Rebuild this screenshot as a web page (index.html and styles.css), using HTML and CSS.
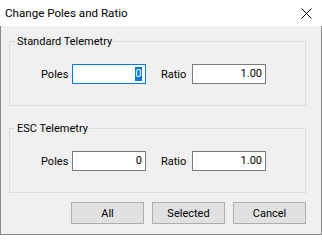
FILE: index.html
```html
<!DOCTYPE html>
<html>
<head>
<meta charset="utf-8">
<link rel="stylesheet" href="styles.css">
</head>
<body>
<div class="window">
  <div class="titlebar">
    <span class="title">Change Poles and Ratio</span>
    <svg class="close" width="11" height="11" viewBox="0 0 11 11"><path d="M0.5 0.5 L10.5 10.5 M10.5 0.5 L0.5 10.5" stroke="#000" stroke-width="1" fill="none"/></svg>
  </div>
  <div class="client">
    <fieldset class="group">
      <legend>Standard Telemetry</legend>
      <div class="row">
        <span class="label">Poles</span>
        <div class="field focus"><span class="sel">0</span></div>
        <span class="label second">Ratio</span>
        <div class="field">1.00</div>
      </div>
    </fieldset>
    <fieldset class="group">
      <legend>ESC Telemetry</legend>
      <div class="row">
        <span class="label">Poles</span>
        <div class="field">0</div>
        <span class="label second">Ratio</span>
        <div class="field">1.00</div>
      </div>
    </fieldset>
    <div class="buttons">
      <div class="btn">All</div>
      <div class="btn">Selected</div>
      <div class="btn">Cancel</div>
    </div>
  </div>
</div>
</body>
</html>
```
FILE: styles.css
```css
html, body {
  margin: 0;
  padding: 0;
  background: #ffffff;
}
body {
  width: 322px;
  height: 241px;
  overflow: hidden;
  font-family: Roboto, "Liberation Sans", sans-serif;
  font-size: 11px;
  color: #000;
}
.window {
  width: 322px;
  height: 235px;
  display: flex;
  flex-direction: column;
}
.titlebar {
  height: 26px;
  flex: none;
  background: #fff;
  display: flex;
  align-items: center;
  justify-content: space-between;
  padding: 0 10px 0 5px;
}
.title {
  font-size: 11.6px;
  line-height: 14px;
}
.close {
  display: block;
}
.client {
  flex: 1;
  background: #f0f0f0;
  border: 1px solid #8a8a8a;
  border-top: none;
  padding: 8px 15px 0 8px;
  display: flex;
  flex-direction: column;
}
.group {
  margin: 0 0 15px 0;
  padding: 15px 0 21px 0;
  border: 1px solid #dcdcdc;
  min-width: 0;
}
.group legend {
  margin-left: 5px;
  padding: 0 1px 0 2px;
  line-height: 15px;
}
.row {
  display: flex;
  align-items: center;
  padding-left: 31px;
}
.label {
  width: 31px;
}
.label.second {
  margin-left: 15px;
}
.field {
  width: 74px;
  height: 20px;
  box-sizing: border-box;
  border: 1px solid #7a7a7a;
  background: #fff;
  text-align: right;
  padding-right: 3px;
  line-height: 18px;
}
.field.focus {
  border-color: #0078d7;
}
.sel {
  background: #0078d7;
  color: #fff;
  display: inline-block;
  line-height: 14px;
  padding: 0 0.5px;
}
.buttons {
  display: flex;
  justify-content: flex-end;
  gap: 8px;
  margin-top: -6px;
}
.btn {
  width: 73px;
  height: 22px;
  box-sizing: border-box;
  background: #e1e1e1;
  border: 1px solid #adadad;
  display: flex;
  align-items: center;
  justify-content: center;
}
```
